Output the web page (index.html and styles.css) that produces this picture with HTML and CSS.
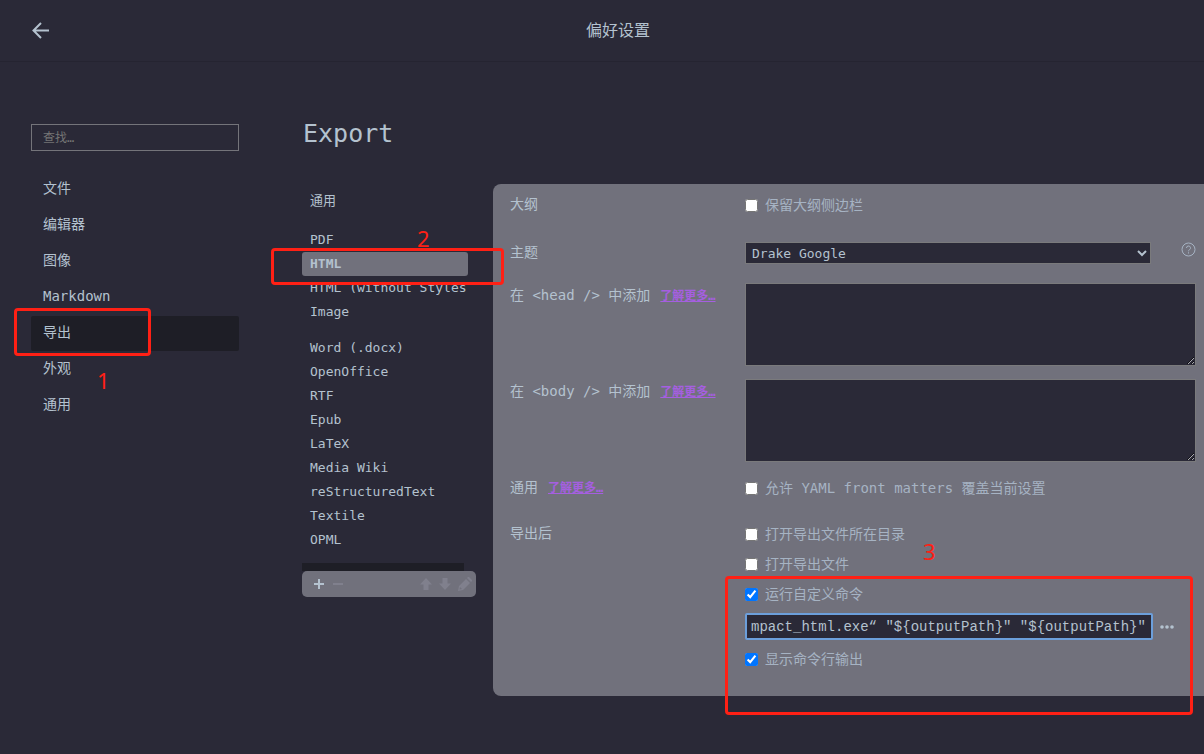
FILE: index.html
```html
<!DOCTYPE html>
<html lang="zh-CN">
<head>
  <meta charset="UTF-8">
  <title>偏好设置</title>
  <meta name="viewport" content="width=device-width, initial-scale=1">
  <link rel="stylesheet" href="styles.css">
</head>
<body>
  <header class="topbar">
    <button class="back" aria-label="返回">
      <svg width="17" height="17" viewBox="0 0 17 17" fill="none" stroke="currentColor" stroke-width="2"><path d="M17 8.5H1.5M9 1L1.5 8.5L9 16"/></svg>
    </button>
    <div class="title">偏好设置</div>
  </header>

  <div class="page">
    <aside class="sidebar">
      <input class="search" type="text" placeholder="查找…" aria-label="查找">
      <nav class="menu">
        <a href="#">文件</a>
        <a href="#">编辑器</a>
        <a href="#">图像</a>
        <a href="#">Markdown</a>
        <a href="#" class="active">导出<span class="mark mark-nav"></span><span class="num num-nav">1</span></a>
        <a href="#">外观</a>
        <a href="#">通用</a>
      </nav>
    </aside>

    <main class="content">
      <h1>Export</h1>
      <div class="export">
        <div class="formats">
          <ul class="format-list">
            <li class="general"><button>通用</button></li>
            <li><button>PDF</button></li>
            <li class="selected"><button>HTML</button><span class="mark mark-format"></span><span class="num num-format">2</span></li>
            <li><button>HTML (without Styles)</button></li>
            <li class="group-end"><button>Image</button></li>
            <li><button>Word (.docx)</button></li>
            <li><button>OpenOffice</button></li>
            <li><button>RTF</button></li>
            <li><button>Epub</button></li>
            <li><button>LaTeX</button></li>
            <li><button>Media Wiki</button></li>
            <li><button>reStructuredText</button></li>
            <li><button>Textile</button></li>
            <li><button>OPML</button></li>
          </ul>
          <div class="strip"></div>
          <div class="tools">
            <button aria-label="添加"><svg width="12" height="12" viewBox="0 0 12 12" stroke="currentColor" stroke-width="2"><path d="M6 1v10M1 6h10"/></svg></button>
            <button class="dim" aria-label="删除"><svg width="12" height="12" viewBox="0 0 12 12" stroke="currentColor" stroke-width="2"><path d="M1 6h10"/></svg></button>
            <span class="spacer"></span>
            <button class="dim" aria-label="上移"><svg width="12" height="12" viewBox="0 0 12 12" fill="currentColor"><path d="M6 0l6 6.500H8.500V12h-5V6.500H0z"/></svg></button>
            <button class="dim" aria-label="下移"><svg width="12" height="12" viewBox="0 0 12 12" fill="currentColor"><path d="M6 12l6-6.500H8.500V0h-5v5.500H0z"/></svg></button>
            <button class="dim" aria-label="编辑"><svg width="14" height="14" viewBox="0 0 14 14" fill="currentColor"><path fill-rule="evenodd" d="M0 14l1-5L8 2l4 4-7 7zM9 1l1-1h1l3 3v1l-1 1zM2 10l-.5 2.500L4 12z"/></svg></button>
          </div>
        </div>

        <form class="panel">
          <div class="row">
            <div class="name">大纲</div>
            <label class="check"><input type="checkbox">保留大纲侧边栏</label>
          </div>
          <div class="row row-theme">
            <label class="name" for="theme">主题</label>
            <div class="theme">
              <select id="theme"><option>Drake Google</option></select>
              <button type="button" aria-label="帮助"><svg width="15" height="15" viewBox="0 0 15 15" fill="none" stroke="currentColor"><circle cx="7.500" cy="7.500" r="6.500"/><path d="M5.500 6a2 2 0 1 1 3 1.700c-.7.5-1 .8-1 1.600M7.500 10.300v1.200"/></svg></button>
            </div>
          </div>
          <div class="row row-code">
            <div class="name"><label for="head">在 &lt;head /&gt; 中添加</label><a href="#">了解更多…</a></div>
            <textarea id="head"></textarea>
          </div>
          <div class="row row-code">
            <div class="name"><label for="body">在 &lt;body /&gt; 中添加</label><a href="#">了解更多…</a></div>
            <textarea id="body"></textarea>
          </div>
          <div class="row row-general">
            <div class="name">通用<a href="#">了解更多…</a></div>
            <label class="check"><input type="checkbox">允许 YAML front matters 覆盖当前设置</label>
          </div>
          <div class="row row-after">
            <div class="name">导出后</div>
            <div class="after">
              <label class="check"><input type="checkbox">打开导出文件所在目录</label>
              <label class="check"><input type="checkbox">打开导出文件</label>
              <label class="check"><input type="checkbox" checked>运行自定义命令</label>
              <div class="command">
                <input type="text" aria-label="自定义命令" value="mpact_html.exe“ &quot;${outputPath}&quot; &quot;${outputPath}&quot;">
                <button type="button" aria-label="更多"><svg width="14" height="4" viewBox="0 0 14 4" fill="currentColor"><circle cx="2" cy="2" r="1.800"/><circle cx="7" cy="2" r="1.800"/><circle cx="12" cy="2" r="1.800"/></svg></button>
              </div>
              <label class="check"><input type="checkbox" checked>显示命令行输出</label>
              <span class="mark mark-command"></span>
              <span class="num num-command">3</span>
            </div>
          </div>
        </form>
      </div>
    </main>
  </div>
</body>
</html>
```
FILE: styles.css
```css
* {
  box-sizing: border-box;
}

body {
  margin: 0;
  min-height: 100vh;
  background: #2a2937;
  color: #b4c2cf;
  font-family: "DejaVu Sans Mono", "Noto Sans CJK SC", monospace;
  font-size: 14px;
  line-height: 22px;
  overflow-x: hidden;
}

button, input, select, textarea {
  font: inherit;
  color: inherit;
}

button {
  background: none;
  border: none;
  padding: 0;
  cursor: pointer;
}

svg {
  display: block;
}

.topbar {
  display: flex;
  align-items: center;
  height: 62px;
  padding: 0 32px;
  border-bottom: 1px solid #252431;
}

.back {
  width: 32px;
}

.title {
  flex: 1;
  text-align: center;
  font-size: 16px;
}

.page {
  display: flex;
  align-items: flex-start;
  padding: 62px 0 56px 31px;
}

.sidebar {
  flex: 0 0 208px;
  margin-right: 63px;
}

.search {
  display: block;
  width: 100%;
  height: 27px;
  padding: 0 11px;
  background: transparent;
  border: 1px solid #74747a;
  font-size: 12px;
}

.search::placeholder {
  color: #757575;
}

.menu {
  display: flex;
  flex-direction: column;
  gap: 1px;
  margin-top: 21px;
}

.menu a {
  position: relative;
  padding: 0 12px 3px;
  line-height: 32px;
  border-radius: 2px;
  color: inherit;
  text-decoration: none;
}

.menu .active {
  background: #1e1e26;
}

.content {
  flex: 1;
  min-width: 0;
}

h1 {
  margin: 0;
  padding: 0 1px;
  font-size: 25px;
  line-height: 20px;
  font-weight: 500;
}

.export {
  display: flex;
  align-items: flex-start;
  gap: 17px;
  margin-top: 40px;
}

.formats {
  flex: 0 0 174px;
  min-width: 0;
  padding-top: 5px;
}

.format-list {
  list-style: none;
  margin: 0;
  padding: 0 8px 0 0;
  font-size: 13px;
}

.format-list li {
  position: relative;
}

.format-list button {
  display: block;
  width: 100%;
  height: 24px;
  padding-left: 8px;
  border-radius: 3px;
  text-align: left;
  white-space: nowrap;
  overflow: hidden;
}

.format-list .general {
  margin-bottom: 15px;
}

.format-list .group-end {
  margin-bottom: 12px;
}

.selected button {
  background: #71717c;
  font-weight: bold;
}

.strip {
  height: 8px;
  margin: 11px 12px 0 0;
  background: #1e1e26;
}

.tools {
  display: flex;
  align-items: center;
  gap: 7px;
  height: 26px;
  padding: 0 4px 0 11px;
  border-radius: 5px;
  background: #71717c;
}

.tools .dim {
  color: #80808d;
}

.spacer {
  flex: 1;
}

.panel {
  flex: 1;
  min-width: 0;
  padding: 10px 8px 26px 17px;
  border-radius: 8px 0 0 8px;
  background: #71717c;
}

.row {
  display: grid;
  grid-template-columns: 235px 1fr;
}

.row-theme {
  margin-top: 26px;
}

.row-code {
  margin-top: 13px;
}

.row-theme + .row-code {
  margin-top: 19px;
}

.name {
  line-height: 20px;
}

.row-code .name {
  padding-top: 2px;
}

.row-general {
  margin-top: 15px;
}

.row-after {
  margin-top: 24px;
}

.name a {
  margin-left: 10px;
  color: #a55fe0;
  font-size: 12px;
  font-weight: bold;
}

.check {
  display: flex;
  align-items: center;
  gap: 7px;
  color: #a6b3c3;
}

.check input {
  width: 13px;
  height: 13px;
  margin: 0;
}

.theme {
  display: flex;
  justify-content: space-between;
  align-items: flex-start;
  color: #a6b3c3;
}

.theme select {
  width: 90%;
  height: 22px;
  padding: 0 2px;
  background: #2a2937;
  border: 1px solid #7a7a7c;
  border-radius: 0;
  color: #b4c2cf;
  font-size: 13px;
}

textarea {
  display: block;
  width: 100%;
  height: 83px;
  background: #2a2937;
  border: 1px solid #7a7a7c;
}

.after {
  position: relative;
  display: flex;
  flex-direction: column;
  gap: 8px;
}

.command {
  display: flex;
  align-items: center;
  gap: 7px;
}

.command input {
  flex: 1;
  min-width: 0;
  height: 27px;
  padding: 0 4px;
  background: #2a2937;
  border: 2px solid #6c9fdb;
  border-radius: 2px;
  outline: none;
  font-family: "Liberation Mono", monospace;
}

.command button {
  margin-right: 22px;
}

/* red step markers */
.mark {
  position: absolute;
  z-index: 1;
  border: 3px solid #ff2015;
  border-radius: 4px;
  pointer-events: none;
}

.num {
  position: absolute;
  z-index: 1;
  color: #ff2015;
  font-family: "Noto Sans", sans-serif;
  font-size: 22px;
  line-height: 22px;
}

.mark-nav {
  left: -17px;
  top: -8px;
  width: 137px;
  height: 48px;
}

.num-nav {
  left: 66px;
  top: 53px;
}

.mark-format {
  left: -31px;
  right: -36px;
  top: -4px;
  height: 37px;
}

.num-format {
  left: 115px;
  top: -25px;
}

.mark-command {
  left: -20px;
  right: 3px;
  top: 53px;
  bottom: -45px;
}

.num-command {
  left: 178px;
  top: 17px;
}
```
